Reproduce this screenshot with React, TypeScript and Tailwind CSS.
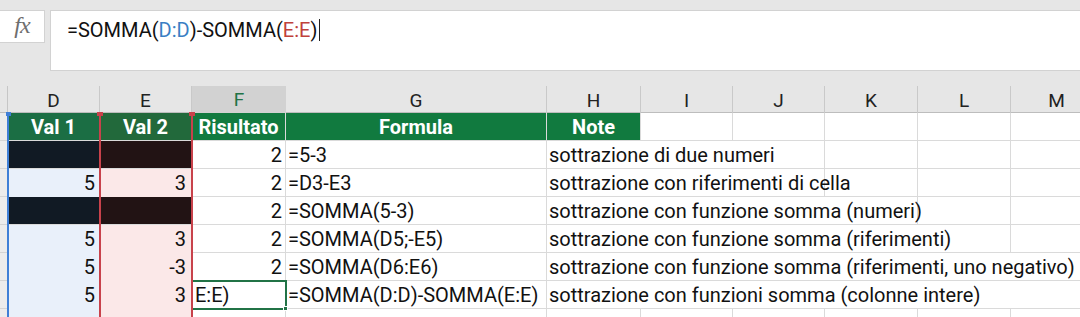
const FONT = "font-['Roboto',sans-serif]";

const letters = ["D", "E", "F", "G", "H", "I", "J", "K", "L", "M"];

type DataRow = {
  d?: string;
  e?: string;
  dark?: boolean;
  f: string;
  g: string;
  h: string;
  span: number;
  active?: boolean;
};

const rows: DataRow[] = [
  { dark: true, f: "2", g: "=5-3", h: "sottrazione di due numeri", span: 3 },
  { d: "5", e: "3", f: "2", g: "=D3-E3", h: "sottrazione con riferimenti di cella", span: 3 },
  { dark: true, f: "2", g: "=SOMMA(5-3)", h: "sottrazione con funzione somma (numeri)", span: 4 },
  { d: "5", e: "3", f: "2", g: "=SOMMA(D5;-E5)", h: "sottrazione con funzione somma (riferimenti)", span: 5 },
  { d: "5", e: "-3", f: "2", g: "=SOMMA(D6:E6)", h: "sottrazione con funzione somma (riferimenti, uno negativo)", span: 6 },
  { d: "5", e: "3", f: "E:E)", g: "=SOMMA(D:D)-SOMMA(E:E)", h: "sottrazione con funzioni somma (colonne intere)", span: 6, active: true },
];

const spanClass: Record<number, string> = {
  3: "col-span-3",
  4: "col-span-4",
  5: "col-span-5",
  6: "col-span-6",
};

function RowHead() {
  return <div className="h-[28px] bg-[#ececec] border-r border-b border-r-[#c6c6c6] border-b-[#d4d4d4]" />;
}

function Cell({ children, className = "" }: { children?: React.ReactNode; className?: string }) {
  return (
    <div className={`h-[28px] flex items-center whitespace-nowrap overflow-visible border-r border-b border-[#dadada] ${className}`}>
      {children}
    </div>
  );
}

export default function App() {
  return (
    <div className={`w-[1080px] h-[317px] overflow-hidden bg-[#e6e6e6] text-[20px] text-[#111] ${FONT}`}>
      {/* formula bar */}
      <div className="flex gap-[5px] pt-[10px] h-[86px]">
        <div className="w-[45px] h-[33px] bg-white border border-l-0 border-[#d2d2d2] flex items-center justify-center">
          <span className="font-['Liberation_Serif',serif] italic text-[24px] text-[#6e6e6e] leading-none -mt-[3px] tracking-[-1px]">
            fx
          </span>
        </div>
        <div className="flex-1 h-[61px] bg-white border border-r-0 border-[#d2d2d2] pl-[16px] pt-[6px]">
          <div className="flex items-center h-[26px] leading-none">
            <span>=SOMMA(</span>
            <span className="text-[#3a7fc4]">D:D</span>
            <span>)-SOMMA(</span>
            <span className="text-[#c0413b]">E:E</span>
            <span>)</span>
            <span className="ml-[2px] w-px h-[22px] bg-[#222]" />
          </div>
        </div>
      </div>

      {/* column headers */}
      <div className="w-[1103px] grid grid-cols-[8px_92px_92px_94px_261px_94px_92px_92px_93px_93px_92px] h-[27px] border-b border-[#bdbdbd]">
        <div className="border-r border-[#c6c6c6]" />
        {letters.map((l) => (
          <div
            key={l}
            className={
              l === "F"
                ? "bg-[#d2d2d2] text-[#217346] border-b-2 border-[#217346] flex items-center justify-center text-[19px]"
                : "border-r border-[#c9c9c9] text-[#222] flex items-center justify-center text-[19px]"
            }
          >
            {l}
          </div>
        ))}
      </div>

      {/* grid body */}
      <div className="relative w-[1103px] bg-white">
        <div className="grid grid-cols-[8px_92px_92px_94px_261px_94px_92px_92px_93px_93px_92px]">
          {/* header row */}
          <RowHead />
          <Cell className="bg-[#1b6e44] border-[#1b6e44] justify-center font-bold text-white">Val 1</Cell>
          <Cell className="bg-[#22693b] border-[#22693b] justify-center font-bold text-white">Val 2</Cell>
          <Cell className="bg-[#117a3f] border-[#117a3f] justify-center font-bold text-white">Risultato</Cell>
          <Cell className="bg-[#117a3f] border-[#117a3f] justify-center font-bold text-white">Formula</Cell>
          <Cell className="bg-[#117a3f] border-[#117a3f] justify-center font-bold text-white">Note</Cell>
          <Cell />
          <Cell />
          <Cell />
          <Cell />
          <Cell />

          {rows.map((r, i) => (
            <div key={i} className="contents">
              <RowHead />
              <Cell
                className={
                  r.dark
                    ? "bg-[#111a24] border-[#111a24]"
                    : "bg-[#e9f0fa] border-[#e9f0fa] justify-end pr-[4px]"
                }
              >
                {r.d}
              </Cell>
              <Cell
                className={
                  r.dark
                    ? "bg-[#221314] border-[#221314]"
                    : "bg-[#fbe8e8] border-[#fbe8e8] justify-end pr-[5px]"
                }
              >
                {r.e}
              </Cell>
              {r.active ? (
                <Cell className="relative pl-[3px]">
                  {r.f}
                  <div className="absolute -left-px -top-px w-[96px] h-[30px] border-2 border-[#217346]" />
                  <div className="absolute -right-[3px] -bottom-[3px] w-[5px] h-[5px] bg-[#217346] border border-white" />
                </Cell>
              ) : (
                <Cell className="justify-end pr-[3px]">{r.f}</Cell>
              )}
              <Cell className="pl-[2px]">{r.g}</Cell>
              <Cell className={`pl-[2px] ${spanClass[r.span]}`}>{r.h}</Cell>
              {Array.from({ length: 6 - r.span }).map((_, k) => (
                <Cell key={k} />
              ))}
            </div>
          ))}

          {/* trailing row */}
          <RowHead />
          <Cell className="bg-[#e9f0fa] border-[#e9f0fa]" />
          <Cell className="bg-[#fbe8e8] border-[#fbe8e8]" />
          <Cell />
          <Cell />
          <Cell />
          <Cell />
          <Cell />
          <Cell />
          <Cell />
          <Cell />
        </div>

        {/* formula reference highlights over columns D and E */}
        <div className="absolute left-[7px] top-0 bottom-0 w-[2px] bg-[#3f7fd6]" />
        <div className="absolute left-[99px] top-0 bottom-0 w-[2px] bg-[#c8424b]" />
        <div className="absolute left-[191px] top-0 bottom-0 w-[2px] bg-[#c8424b]" />
        <div className="absolute left-[6px] -top-[1px] w-[5px] h-[4px] bg-[#3f7fd6]" />
        <div className="absolute left-[97px] -top-[1px] w-[6px] h-[4px] bg-[#c8424b]" />
        <div className="absolute left-[189px] -top-[1px] w-[6px] h-[4px] bg-[#c8424b]" />
      </div>
    </div>
  );
}
